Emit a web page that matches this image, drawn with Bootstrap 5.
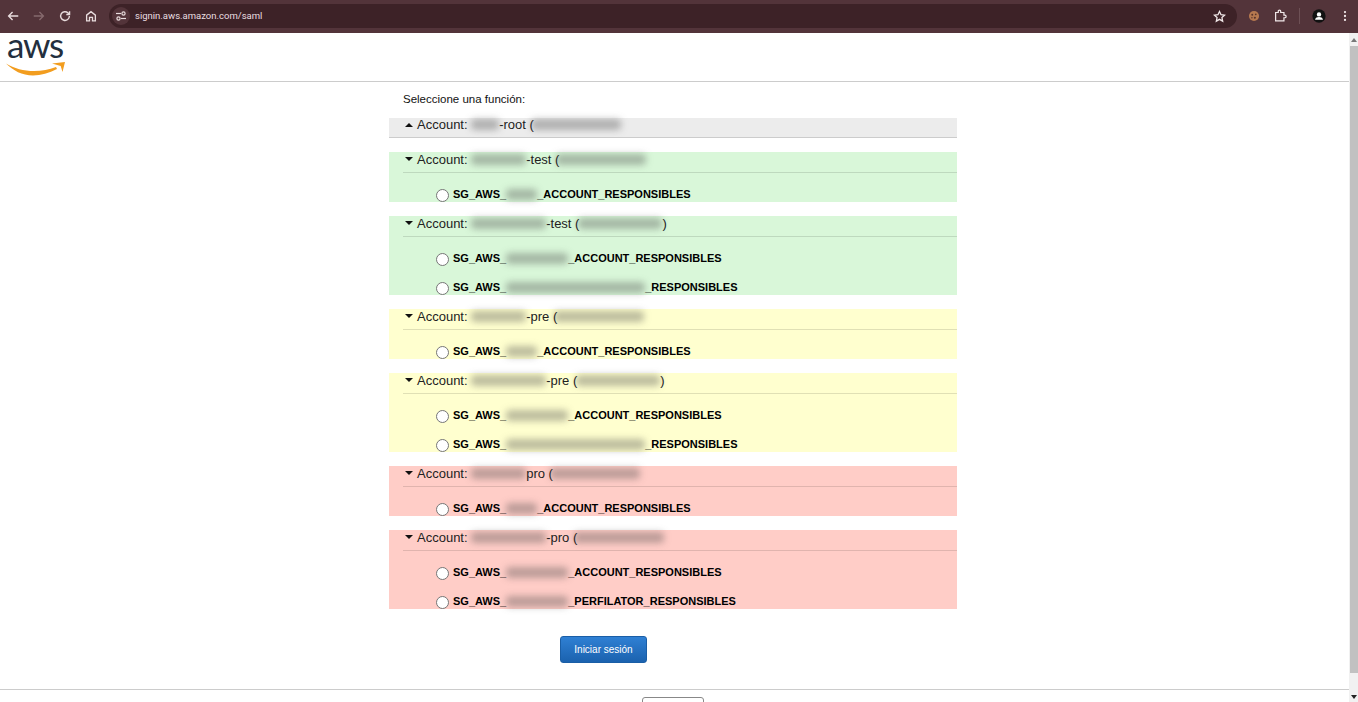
<!DOCTYPE html>
<html lang="es">
<head>
  <meta charset="UTF-8" />
  <meta name="viewport" content="width=device-width, initial-scale=1.0">
  <title>Amazon Web Services Sign-In</title>
  <link href="https://cdn.jsdelivr.net/npm/bootstrap@5.3.0/dist/css/bootstrap.min.css" rel="stylesheet">
  <style>
    html, body { height: 100%; overflow: hidden; background: #fff; }
    body { font-family: "Liberation Sans", Arial, sans-serif; color: #111; }

    /* browser chrome */
    .chrome-bar { height: 33px; background: #53343a; color: #e8dcdd; padding: 0 0 1px 0; }
    .chrome-btn { width: 26px; height: 26px; flex: none; }
    .chrome-btn svg { width: 14px; height: 14px; }
    .addr-pill { height: 24px; margin: 0 4px 0 5px; background: #3d2227; border-radius: 12px; padding: 0 11px 0 3px; font-family: Roboto, sans-serif; font-size: 9.5px; color: #e9dfe0; }
    .addr-tune { width: 18px; height: 18px; border-radius: 50%; background: #53343a; margin-right: 5px; }
    .chrome-sep { width: 1px; height: 16px; background: #6d5055; margin: 0 6px; }

    /* page */
    .page-wrap { height: 669px; }
    .page-main { width: 1349px; }
    .site-head { height: 49px; border-bottom: 1px solid #ccc; padding: 4px 0 0 5px; }
    .aws-word { font-family: Lato, sans-serif; font-size: 35px; line-height: 15px; letter-spacing: -1.3px; color: #232f3e; margin-left: 2px; height: 25px; }
    .role-form { width: 568px; margin-left: 389px; }
    .role-title { font-size: 11.5px; line-height: 14px; padding: 10px 0 0 14px; margin-bottom: 12px; }

    .acc-group { margin-bottom: 14px; }
    .acc-root { background: #ececec; }
    .acc-test { background: #d9f7d9; }
    .acc-pre { background: #ffffcf; }
    .acc-pro { background: #ffcdc7; }
    .acc-head { height: 21px; margin-left: 14px; border-bottom: 1px solid rgba(0, 0, 0, .12); font-size: 13px; line-height: 15px; padding-bottom: 6px; color: #222; }
    .acc-root .acc-head { height: 20px; margin-left: 0; padding-left: 14px; border-color: #ccc; }
    .caret-down, .caret-up { width: 0; height: 0; border-left: 4px solid transparent; border-right: 4px solid transparent; margin: 0 4px 0 2px; flex: none; }
    .caret-down { border-top: 4px solid #111; }
    .caret-up { border-bottom: 4px solid #111; }
    .role-row { height: 29px; padding: 15px 0 1px 47px; font-size: 11px; font-weight: 700; color: #000; }
    .role-row input { width: 13px; height: 13px; margin: 1px 4px 0 0; border: 1px solid #767676; flex: none; background-color: #fff; }
    .smudge { display: inline-block; height: 11px; border-radius: 4px; background: rgba(70, 70, 70, .36); filter: blur(3.5px); flex: none; }
    .sm-29 { width: 28px; }
    .sm-31 { width: 31px; }
    .sm-57 { width: 55px; }
    .sm-62 { width: 62px; }
    .sm-77 { width: 75px; }
    .sm-92 { width: 90px; margin-left: -3px; }
    .sm-84 { width: 84px; margin-left: -1px; }
    .sm-139 { width: 139px; }

    .signin-btn { width: 87px; height: 27px; margin: 27px 0 0 171px; padding: 0; font-size: 10px; color: #fff; border: 1px solid #1a5ea6; border-radius: 3px; background: linear-gradient(#2f80d4, #1b62ae); }
    .site-foot { margin-top: 26px; border-top: 1px solid #ccc; padding: 7px 3px 0 0; }
    .lang-box { width: 62px; height: 20px; border: 1px solid #888; border-radius: 3px; background: #fff; }

    /* scrollbar */
    .fake-scroll { width: 9px; background: #f1f1f1; }
    .scroll-up { height: 13px; }
    .scroll-thumb { background: #c1c1c1; margin-left: 1px; }
    .scroll-down { height: 29px; padding-bottom: 3px; }
    .tri-up, .tri-down { width: 0; height: 0; border-left: 3px solid transparent; border-right: 3px solid transparent; }
    .tri-up { border-bottom: 4px solid #777; }
    .tri-down { border-top: 4px solid #222; }
  </style>
</head>
<body>
  <!-- Browser toolbar -->
  <div class="chrome-bar d-flex align-items-center">
    <div class="chrome-btn d-flex align-items-center justify-content-center">
      <svg viewBox="0 0 16 16" fill="none" stroke="#e8dcdd" stroke-width="1.6"><path d="M14 8H3M7.500 3.500 3 8l4.500 4.500"/></svg>
    </div>
    <div class="chrome-btn d-flex align-items-center justify-content-center">
      <svg viewBox="0 0 16 16" fill="none" stroke="#85696d" stroke-width="1.6"><path d="M2 8h11M8.500 3.500 13 8l-4.500 4.500"/></svg>
    </div>
    <div class="chrome-btn d-flex align-items-center justify-content-center">
      <svg viewBox="0 0 16 16" fill="none" stroke="#e8dcdd" stroke-width="1.6"><path d="M13 8a5 5 0 1 1-1.500-3.500L13 6"/><path d="M13.200 2.500V6.200H9.500" /></svg>
    </div>
    <div class="chrome-btn d-flex align-items-center justify-content-center">
      <svg viewBox="0 0 16 16" fill="none" stroke="#e8dcdd" stroke-width="1.5"><path d="M3 7 8 3l5 4v6.500H9.700V9.500H6.300v4H3z"/></svg>
    </div>
    <div class="addr-pill flex-grow-1 d-flex align-items-center">
      <span class="addr-tune d-flex align-items-center justify-content-center">
        <svg width="12" height="12" viewBox="0 0 12 12" fill="none" stroke="#e8dcdd" stroke-width="1.2"><path d="M1 3.500h5"/><circle cx="8.500" cy="3.500" r="1.600"/><path d="M11 8.500H6"/><circle cx="3.500" cy="8.500" r="1.600"/></svg>
      </span>
      <span>signin.aws.amazon.com/saml</span>
      <svg class="ms-auto" width="13" height="13" viewBox="0 0 16 16" fill="none" stroke="#f1e8e9" stroke-width="1.6"><path d="m8 1.800 1.900 4 4.300.5-3.200 3 .9 4.400L8 11.500l-3.900 2.200.9-4.400-3.200-3 4.300-.5z"/></svg>
    </div>
    <div class="chrome-btn d-flex align-items-center justify-content-center">
      <svg viewBox="0 0 16 16"><circle cx="8" cy="8" r="5.800" fill="#b5784f"/><circle cx="6" cy="6.500" r="1.100" fill="#59342c"/><circle cx="10" cy="6" r="1" fill="#59342c"/><circle cx="9" cy="10" r="1.200" fill="#59342c"/><circle cx="5.600" cy="10" r=".8" fill="#59342c"/></svg>
    </div>
    <div class="chrome-btn d-flex align-items-center justify-content-center">
      <svg viewBox="0 0 16 16" fill="none" stroke="#f1e8e9" stroke-width="1.4"><path d="M3 4h3V2.600a1.400 1.400 0 0 1 2.800 0V4H12.500v3h1a1.500 1.500 0 0 1 0 3h-1v3.500H3z"/></svg>
    </div>
    <div class="chrome-sep"></div>
    <div class="chrome-btn d-flex align-items-center justify-content-center">
      <svg viewBox="0 0 16 16"><circle cx="8" cy="8" r="7.600" fill="#111"/><circle cx="8" cy="6.200" r="2.500" fill="#fff"/><path d="M3.400 12.200c.5-2.200 2.400-3 4.600-3s4.100.8 4.600 3z" fill="#fff"/></svg>
    </div>
    <div class="chrome-btn d-flex align-items-center justify-content-center">
      <svg viewBox="0 0 16 16" fill="#f1e8e9"><circle cx="8" cy="3.500" r="1.300"/><circle cx="8" cy="8" r="1.300"/><circle cx="8" cy="12.500" r="1.300"/></svg>
    </div>
  </div>

  <div class="page-wrap d-flex">
    <div class="page-main flex-grow-1">
      <div class="site-head">
        <div class="aws-word">aws</div>
        <svg class="d-block" width="62" height="16" viewBox="0 0 62 16"><path d="M1 1.500C9 6.500 19 9 29 9c8 0 15-1.500 22-4l1 2C44 11 36 13.500 28 13.500 17 13.500 8 8.500 1 1.500z" fill="#f29d1f"/><path d="M47 1.500 60 0l-2.500 10-1.800-6z" fill="#f29d1f"/></svg>
      </div>

      <form class="role-form">
        <div class="role-title">Seleccione una función:</div>

        <div class="acc-group acc-root">
          <div class="acc-head d-flex align-items-center"><i class="caret-up"></i>Account:&nbsp;<span class="smudge sm-29"></span>-root&nbsp;(<span class="smudge sm-92"></span></div>
        </div>

        <div class="acc-group acc-test">
          <div class="acc-head d-flex align-items-center"><i class="caret-down"></i>Account:&nbsp;<span class="smudge sm-57"></span>-test&nbsp;(<span class="smudge sm-92"></span></div>
          <label class="role-row d-flex align-items-center"><input class="form-check-input" type="radio" name="role">SG_AWS_<span class="smudge sm-31"></span>_ACCOUNT_RESPONSIBLES</label>
        </div>

        <div class="acc-group acc-test">
          <div class="acc-head d-flex align-items-center"><i class="caret-down"></i>Account:&nbsp;<span class="smudge sm-77"></span>-test&nbsp;(<span class="smudge sm-84"></span>)</div>
          <label class="role-row d-flex align-items-center"><input class="form-check-input" type="radio" name="role">SG_AWS_<span class="smudge sm-62"></span>_ACCOUNT_RESPONSIBLES</label>
          <label class="role-row d-flex align-items-center"><input class="form-check-input" type="radio" name="role">SG_AWS_<span class="smudge sm-139"></span>_RESPONSIBLES</label>
        </div>

        <div class="acc-group acc-pre">
          <div class="acc-head d-flex align-items-center"><i class="caret-down"></i>Account:&nbsp;<span class="smudge sm-57"></span>-pre&nbsp;(<span class="smudge sm-92"></span></div>
          <label class="role-row d-flex align-items-center"><input class="form-check-input" type="radio" name="role">SG_AWS_<span class="smudge sm-31"></span>_ACCOUNT_RESPONSIBLES</label>
        </div>

        <div class="acc-group acc-pre">
          <div class="acc-head d-flex align-items-center"><i class="caret-down"></i>Account:&nbsp;<span class="smudge sm-77"></span>-pre&nbsp;(<span class="smudge sm-84"></span>)</div>
          <label class="role-row d-flex align-items-center"><input class="form-check-input" type="radio" name="role">SG_AWS_<span class="smudge sm-62"></span>_ACCOUNT_RESPONSIBLES</label>
          <label class="role-row d-flex align-items-center"><input class="form-check-input" type="radio" name="role">SG_AWS_<span class="smudge sm-139"></span>_RESPONSIBLES</label>
        </div>

        <div class="acc-group acc-pro">
          <div class="acc-head d-flex align-items-center"><i class="caret-down"></i>Account:&nbsp;<span class="smudge sm-57"></span>pro&nbsp;(<span class="smudge sm-92"></span></div>
          <label class="role-row d-flex align-items-center"><input class="form-check-input" type="radio" name="role">SG_AWS_<span class="smudge sm-31"></span>_ACCOUNT_RESPONSIBLES</label>
        </div>

        <div class="acc-group acc-pro">
          <div class="acc-head d-flex align-items-center"><i class="caret-down"></i>Account:&nbsp;<span class="smudge sm-77"></span>-pro&nbsp;(<span class="smudge sm-92"></span></div>
          <label class="role-row d-flex align-items-center"><input class="form-check-input" type="radio" name="role">SG_AWS_<span class="smudge sm-62"></span>_ACCOUNT_RESPONSIBLES</label>
          <label class="role-row d-flex align-items-center"><input class="form-check-input" type="radio" name="role">SG_AWS_<span class="smudge sm-62"></span>_PERFILATOR_RESPONSIBLES</label>
        </div>

        <button type="button" class="btn signin-btn d-block">Iniciar sesión</button>
      </form>

      <div class="site-foot d-flex justify-content-center">
        <div class="lang-box"></div>
      </div>
    </div>

    <div class="fake-scroll d-flex flex-column">
      <div class="scroll-up d-flex align-items-center justify-content-center"><i class="tri-up"></i></div>
      <div class="scroll-thumb flex-grow-1"></div>
      <div class="scroll-down d-flex align-items-end justify-content-center"><i class="tri-down"></i></div>
    </div>
  </div>

  <script src="https://cdn.jsdelivr.net/npm/bootstrap@5.3.0/dist/js/bootstrap.bundle.min.js"></script>
</body>
</html>
